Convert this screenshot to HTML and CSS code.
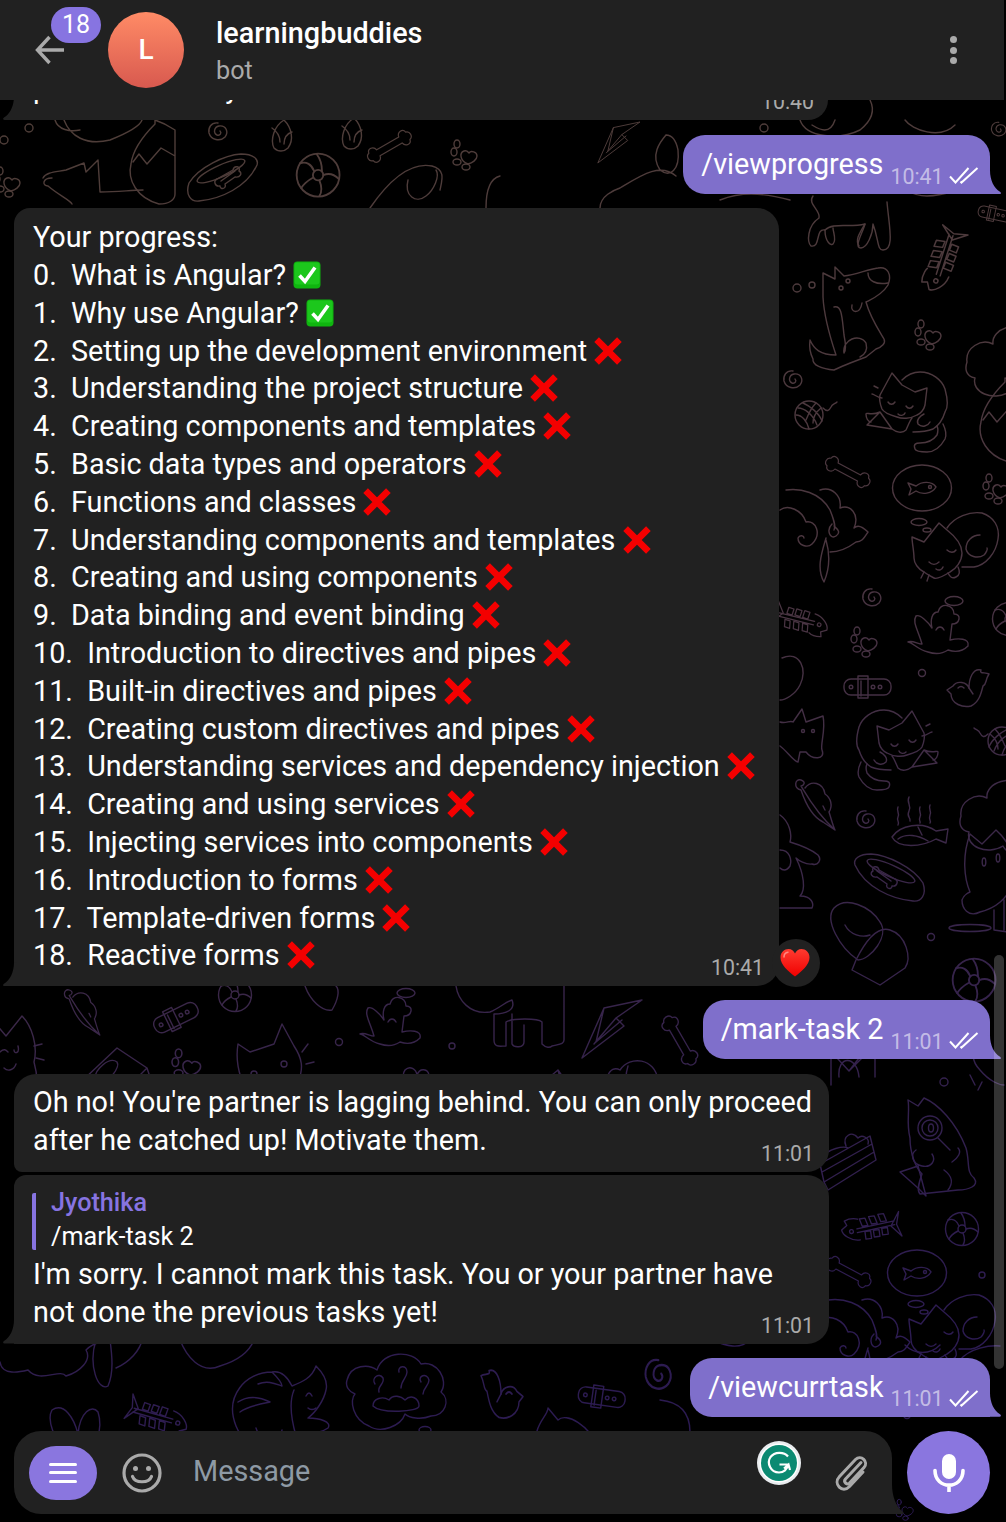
FILE: index.html
```html
<!DOCTYPE html>
<html lang="en">
<head>
<meta charset="utf-8">
<title>learningbuddies</title>
<link rel="stylesheet" href="styles.css">
</head>
<body>
<svg class="sprites" width="0" height="0" aria-hidden="true">
  <defs>
    <symbol id="i-x" viewBox="0 0 28 28"><path d="M2.6 2.6 25.4 25.4M25.4 2.6 2.6 25.4" stroke="#f40000" stroke-width="6.6" fill="none"/></symbol>
    <symbol id="i-ok" viewBox="0 0 28 28"><rect x="0.5" y="0.5" width="27" height="27" rx="4" fill="#0fb50f"/><rect x="1.5" y="1.5" width="25" height="22" rx="3" fill="#25d425" opacity=".6"/><path d="M6.5 14.5 12 20.5 22 6.5" stroke="#fff" stroke-width="3.6" fill="none" stroke-linejoin="miter"/></symbol>
    <symbol id="i-ticks" viewBox="0 0 30 18"><path d="M1 10.5 6.5 16.5 19.500 2M11.500 15.500 12.500 16.500 28.500 2" stroke="#fff" stroke-width="2" fill="none"/></symbol>
  </defs>
</svg>

<svg class="wallpaper" viewBox="0 0 1006 1522" aria-hidden="true">
  <defs>
    <linearGradient id="wg" gradientUnits="userSpaceOnUse" x1="0" y1="100" x2="260" y2="1500">
      <stop offset="0" stop-color="#4f3e38"/>
      <stop offset=".42" stop-color="#4b3640"/>
      <stop offset=".68" stop-color="#38254a"/>
      <stop offset="1" stop-color="#2b1a52"/>
    </linearGradient>
    <g id="bone"><path d="M10-4H40C41-10 49-11 50-5 55-4 55 4 50 5 49 11 41 10 40 4H10C9 10 1 11 0 5-5 4-5-4 0-5 1-11 9-10 10-4Z"/></g>
    <g id="paw"><path d="M17 23C9 20 8 12 13 10 16 9 17 11 18 12 20 9 26 11 26 15 26 19 21 22 17 23Z"/><ellipse cx="6" cy="3" rx="3" ry="4"/><ellipse cx="3" cy="11" rx="3" ry="4"/><ellipse cx="6" cy="21" rx="4" ry="3"/><ellipse cx="15" cy="26" rx="4" ry="3"/></g>
    <g id="ball"><circle cx="17" cy="17" r="16.500"/><circle cx="17" cy="17" r="4"/><path d="M14 14C12 9 8 6 3 8M20 14C20 9 19 5 16 1M21 17C26 15 30 17 33 20M18 21C20 26 20 30 18 33M13 19C9 21 5 25 4 27"/></g>
    <g id="yarn"><circle cx="14" cy="15" r="14"/><path d="M3 8C9 8 18 14 22 25M8 3C15 6 24 13 27 21M1 15C7 15 12 21 14 29M21 3C16 8 13 15 11 20M26 8C21 12 18 18 18 23M28 8C32 12 34 11 36 7 37 4 40 4 42 2"/></g>
    <g id="fishbone"><path d="M0 0 10 12 0 26 4 13ZM6 13 46 10M6 17 46 14M14 4H20V11H14ZM23 3H29V10H23ZM32 2H38V10H32ZM14 18H20L22 26H16ZM24 17H30L32 25H26ZM34 16H40L42 24H36ZM44 2C54 2 62 10 62 15L56 19 58 24C50 27 44 24 44 24"/><circle cx="52" cy="12" r="2"/></g>
    <g id="collar"><rect x="0" y="3" width="47" height="16" rx="7"/><path d="M14 0H24V22H14ZM17 5V20"/><circle cx="29" cy="11" r="1.800"/><circle cx="36" cy="11" r="1.800"/><circle cx="7" cy="11" r="1.800"/></g>
    <g id="bowl"><path d="M2 30C-2 42 4 49 12 48 34 46 60 34 70 12 72 6 66 1 54 1 38 2 12 14 2 30Z"/><ellipse cx="34" cy="18" rx="26" ry="6" transform="rotate(-24 34 18)"/><path d="M34 28 48 18M30 26C26 28 28 34 33 33 33 37 40 36 38 31L48 24C53 25 56 20 52 18 54 13 47 12 46 17Z"/></g>
    <g id="spiral"><path d="M11 3C4 2 1 8 2 13 4 20 13 22 18 17 22 12 19 5 12 6 7 7 6 13 10 15 13 16 15 13 13 11"/></g>
    <g id="plate"><ellipse cx="30" cy="23" rx="29.500" ry="23"/><path d="M17 30 19 24 16 18 24 21C30 16 40 16 44 22 40 29 30 30 24 26Z"/><circle cx="38" cy="22" r="1.500"/></g>
    <g id="catsleep"><path d="M0 22 12 27 27 8 35 15C44 22 50 30 50 38 50 46 44 54 38 57 30 62 24 64 22 63 16 60 12 57 12 57 6 54 2 48 2 43 2 36 0 28 0 22Z"/><path d="M35 13C42 2 58-4 70-2 82 2 88 12 86 24 84 38 74 50 62 52L50 52"/><path d="M68 20C60 20 54 26 54 34 56 42 66 44 72 40 74 38 76 34 75 33M17 47C20 50 24 50 27 47M35 35C38 38 42 38 44 35M24 54C27 56 30 55 31 52M12 57 9 63M17 60 15 66M36 58C38 62 40 64 44 62 48 60 48 56 46 52"/><ellipse cx="7" cy="7" rx="8" ry="3.500"/><ellipse cx="15" cy="15" rx="4" ry="2"/></g>
    <g id="catletter"><path d="M14 23 26 1 36 13 49 20 61 16 59 33C58 38 54 42 51 43 44 47 36 47 31 45 24 43 18 41 16 37 14 32 13 27 14 23Z"/><path d="M36 8C42 2 48 0 54 0 66 0 76 8 79 17 82 28 82 36 79 40 76 50 72 54 67 57 60 60 54 60 47 60"/><path d="M77 52C80 58 81 62 79 67 74 76 68 80 61 80 56 80 50 80 49 77 47 72 50 71 54 71 60 71 66 70 71 63 72 60 72 56 71 54"/><path d="M1 53 14 40 26 57ZM14 40C6 44 0 40 0 42 0 46 2 50 5 50M16 26C12 26 8 22 6 22M12 16 8 14M22 30C24 33 27 33 29 30M40 34C42 37 45 37 47 34M32 42C34 44 38 44 39 41M26 57C30 60 36 62 40 58 42 54 44 48 46 46M58 42C54 44 50 48 52 52 56 56 62 54 64 50"/></g>
    <g id="dogsit"><path d="M13 6 25 12 25 0 34 9C46 8 58 2 68 1 78-1 82 8 78 18 72 28 62 32 56 35 60 50 68 62 74 72 76 76 72 80 66 82L56 90C40 96 30 100 24 103 12 102 2 98 3 92 0 86-1 80 0 73 4 82 10 88 26 88 20 70 14 50 13 30Z"/><path d="M58 6C58 14 66 18 78 16M24 40C32 38 32 50 34 68 36 78 36 84 34 86M34 86C32 72 50 66 56 76 58 84 54 88 50 90M42 38C40 46 50 48 52 36"/><circle cx="38" cy="14" r="2"/><circle cx="31" cy="21" r="2"/></g>
    <g id="dogwalk"><path d="M2 0C-4 8 10 14 8 22-4 30-4 46 0 50 10 52 4 32 14 34 22 26 38 32 54 28 52 36 42 52 50 52 56 52 62 38 62 28 68 44 66 54 72 54 84 54 78 30 76 6"/><path d="M14 34C14 46 20 50 22 48 26 44 22 36 22 32M54 28C48 38 44 44 48 50"/></g>
    <g id="cloud"><path d="M0 54C-2 40 14 30 26 36 24 20 52 12 66 24 72 14 88 18 90 30 102 30 108 50 96 56 104 64 100 76 84 76 82 94 50 100 42 84 26 94 4 84 8 70-2 68-2 60 0 54Z"/></g>
    <g id="swirl"><path d="M0 20C8 14 22 20 26 32 36 30 42 44 32 54 28 58 18 56 18 48 20 44 24 46 24 48M6 0C20-2 40 2 50 20 54 30 56 36 54 40M40 0C52-4 62 6 60 18 70 14 80 24 74 38 78 34 84 38 88 42 84 48 82 52 76 52 68 58 60 62 50 62M46 48C42 62 36 78 44 92 50 78 50 64 46 50M52 34C46 40 50 50 56 46 62 42 56 38 54 36"/></g>
    <g id="thought"><path d="M2 30C6 14 24 14 32 20 38 0 68 0 76 14 92 10 104 30 96 42 106 50 100 66 86 66 76 70 64 68 60 64 56 76 36 84 24 76 8 70 4 50 10 44 4 42 0 36 2 30Z"/><path d="M30 34C26 28 34 22 38 28 40 34 32 36 34 42M54 22C52 16 62 14 62 22 62 28 56 30 56 38M76 32C72 26 82 22 84 30 84 36 78 38 78 44M28 56C28 48 38 46 44 50 48 44 56 46 60 50 66 44 74 48 74 56 74 62 36 64 28 56Z"/><ellipse cx="80" cy="80" rx="6" ry="3.500"/></g>
    <g id="cathead"><path d="M18 80C8 64-2 44 2 20L14 28 38 20 46 0 58 22C66 34 68 44 62 58 60 72 56 78 50 84"/><circle cx="18" cy="50" r="3"/><circle cx="48" cy="40" r="3"/><path d="M32 62C26 62 30 72 36 68 40 74 50 68 44 62M35 58 34 66M66 28 72 20M70 40 78 38M70 54 78 54M-6 62H2"/></g>
    <g id="bird"><path d="M2 22 8 18C12 12 22 14 24 20 24 10 28 0 36 2 34 6 40 4 44 6 40 12 42 16 38 18 36 26 34 34 26 38 18 40 6 36 6 26Z"/><path d="M13 20C15 18 17 18 19 20M24 20 28 26"/></g>
    <g id="heart"><path d="M14 33C4 24-2 12 3 5 8 0 14 4 15 10 18 2 26 4 27 10 29 18 22 28 14 33Z"/></g>
    <g id="plane"><path d="M0 58 22 8 60 0 34 18 42 26ZM22 8 14 42 40 20M12 44 34 18"/></g>
    <g id="mouse"><path d="M8 10C0 8 2-2 8 0 14 2 10 6 8 6 14 16 24 34 42 50L30 42C22 38 14 28 8 10ZM12 8C18 0 30 2 32 14 38 18 40 26 36 32 38 38 40 46 42 50M30 26 32 30"/></g>
    <g id="fishsteam"><path d="M0 40C8 28 30 24 44 34L56 32 54 46 44 42C30 50 6 52 0 40ZM6 42C14 36 26 38 36 44M26 30 30 38"/><path d="M6 10C4 14 8 16 6 20 4 24 8 24 6 28M17 0C14 6 20 8 17 14 14 20 19 20 18 24M28 10C26 14 30 16 28 20 26 24 29 24 28 26M38 8C36 12 40 14 38 18 36 24 40 24 38 26"/></g>
    <g id="house"><path d="M0 30 36 0 54 26 24 56ZM36 0 44 30 24 56M6 38V70M50 30V62M14 62C12 40 32 40 34 62"/></g>
    <g id="cake"><path d="M0 36 50 8 54 24 4 54ZM2 44 52 16M4 54 8 62 56 32 54 24M2 30C8 20 24 18 28 20M26 18C22 8 32 2 38 10 42 6 50 10 48 16"/></g>
    <g id="angel"><path d="M18 52C8 50 2 42-2 42 2 40 8 44 12 44 8 30 2 22 6 16 10 14 18 22 22 28 20 20 22 12 28 12 30 2 44 4 44 14 52 14 50 24 42 24L40 40C48 38 60 38 58 46 52 52 44 52 38 50 32 54 24 54 18 52Z"/><ellipse cx="44" cy="1" rx="9" ry="4.500"/><path d="M26 30C28 26 32 26 34 30"/></g>
    <g id="dogmag"><path d="M2 40C-2 24 2 14 0 2L10 8 16 0C30 6 48 24 58 50 62 64 58 74 66 80 72 88 60 92 50 92L12 96C8 92 12 82 14 76 8 70 2 56 2 40Z"/><circle cx="22" cy="30" r="12"/><circle cx="22" cy="30" r="8"/><ellipse cx="23" cy="30" rx="2.500" ry="4"/><path d="M30 40 42 52M8 52C2 56 4 66 14 68 24 70 28 62 24 56M-8 74 10 68 18 98 10 90Z"/><path d="M36 72C44 78 46 84 40 92M44 64C50 60 54 54 50 50"/></g>
    <g id="fox"><path d="M30 4C20 14 8 28 6 44 2 60 12 78 34 84 44 84 50 80 50 74V10C44 6 36 2 30 0ZM8 42 14 34 22 44 36 28 50 36"/></g>
    <g id="stripecat"><path d="M60 30C70 26 80 22 84 10 92 18 96 26 94 34 92 44 84 56 76 62 88 62 100 66 96 72 88 78 74 78 64 80 50 96 14 96 4 70-8 40 14 16 40 16 50 14 56 22 60 30ZM40 16C48 24 50 28 50 30 44 28 36 24 26 28M6 46C18 38 30 42 38 46 28 48 16 50 8 56M62 34C56 48 60 66 64 80M50 74 46 90M38 78 38 94M24 72 30 88"/><path d="M74 40C76 36 78 36 80 40M84 52C82 54 78 54 76 52"/></g>
    <g id="bigdog"><path d="M8 0 20 10 34-4C50 10 56 30 50 50 46 64 34 74 18 78 6 84 0 74 0 66 2 60 8 58 8 58 2 44 0 22 8 0ZM42 66V96M32 76V96L46 98M54 60V96H62C66 94 64 80 60 64"/><ellipse cx="22" cy="28" rx="1.800" ry="4"/><ellipse cx="36" cy="24" rx="1.800" ry="4"/></g>
    <g id="cat2"><path d="M2 90C-2 60 0 30 8 8L18 20 34 0C44 10 50 30 46 46 50 60 50 76 44 90"/><path d="M12 36C16 32 18 34 20 36M30 30C32 38 26 38 26 34M16 52C20 56 26 54 28 48M46 30 54 28M48 42 56 44"/></g>
    <g id="box"><path d="M0 32 34 0 64 20 32 52ZM0 32 4 60 30 82 32 52M64 20 76 56 54 70M12 30C12 22 26 8 34 14 38 20 24 34 18 38"/></g>
    <g id="leaf"><path d="M14 0C4 6 0 20 4 28 8 32 14 32 18 28 24 20 22 8 14 0ZM2 8C8 12 10 16 10 22M22 12C16 14 14 18 14 24"/></g>
    <mask id="wm" maskUnits="userSpaceOnUse" x="0" y="0" width="1006" height="1522">
      <g fill="none" stroke="#fff" stroke-width="1.400" stroke-linejoin="round" stroke-linecap="round">
        <use href="#bone" transform="translate(371 157) rotate(-30) scale(.85)"/>
        <use href="#paw" transform="translate(451 141)"/>
        <use href="#paw" transform="translate(-6 168)"/>
        <use href="#ball" transform="translate(296 153) scale(1.300)"/>
        <use href="#bowl" transform="translate(187 153)"/>
        <use href="#fox" transform="translate(125 120)"/>
        <path d="M43 178C46 172 56 172 66 170L84 163 86 172 98 160 100 192C120 192 130 190 143 190M52 178C42 178 42 186 48 186 60 196 70 200 72 204"/>
        <path d="M64 120C70 136 86 146 110 140 130 132 140 126 142 120M55 120C58 130 70 132 80 130"/>
        <circle cx="29" cy="128" r="4"/><circle cx="4" cy="140" r="4"/>
        <use href="#leaf" transform="translate(270 120)"/>
        <use href="#spiral" transform="translate(207 120)"/>
        <use href="#leaf" transform="translate(340 118)"/>
        <path d="M370 208C392 176 412 162 432 166 446 170 442 180 440 190M408 180C404 196 416 204 426 196 434 190 440 176 436 170M486 208C486 186 492 178 500 176"/>
        <use href="#plane" transform="translate(598 122) scale(.7)"/>
        <path d="M600 208C600 196 614 190 620 188 640 176 660 162 676 176M666 135C660 142 650 155 660 170 670 178 680 170 678 150 676 140 672 135 666 135"/>
        <path d="M800 120C806 138 840 140 860 130 870 122 876 112 870 100M835 120C830 135 820 130 812 125M905 120C912 130 940 140 955 125M892 140C894 150 900 156 906 160"/>
        <circle cx="764" cy="128" r="4"/>
        <use href="#spiral" transform="translate(990 120) scale(.8)"/>
        <use href="#dogwalk" transform="translate(811 196)"/>
        <path d="M720 200C740 192 760 192 790 200M905 190C920 198 930 198 960 190"/>
        <use href="#fishbone" transform="translate(968 235) rotate(112) scale(1.050)"/>
        <use href="#collar" transform="translate(980 203) rotate(12) scale(.7)"/>
        <circle cx="797" cy="288" r="4"/><circle cx="812" cy="285" r="3"/>
        <use href="#dogsit" transform="translate(810 267)"/>
        <use href="#paw" transform="translate(915 321)"/>
        <use href="#cloud" transform="translate(967 308)"/>
        <use href="#catletter" transform="translate(866 372)"/>
        <use href="#yarn" transform="translate(795 400)"/>
        <use href="#spiral" transform="translate(782 368)"/>
        <use href="#fox" transform="translate(975 378)"/>
        <use href="#bone" transform="translate(829 462) rotate(28) scale(.85)"/>
        <use href="#plate" transform="translate(892 465)"/>
        <use href="#paw" transform="translate(983 475)"/>
        <use href="#catsleep" transform="translate(912 515)"/>
        <use href="#swirl" transform="translate(780 490)"/>
        <use href="#spiral" transform="translate(861 586)"/>
        <use href="#fishbone" transform="translate(778 600) rotate(18) scale(.9)"/>
        <use href="#paw" transform="translate(851 628)"/>
        <use href="#angel" transform="translate(910 600)"/>
        <circle cx="922" cy="673" r="3.500"/>
        <use href="#ball" transform="translate(992 602)"/>
        <use href="#collar" transform="translate(844 676)"/>
        <use href="#bird" transform="translate(945 668)"/>
        <path d="M782 658C800 650 808 670 800 685 795 695 785 700 780 700"/>
        <path d="M780 722C786 724 790 720 793 722L802 709 806 722 823 716C826 730 820 745 822 750 826 760 812 760 806 752L800 752 798 762C794 762 786 750 780 746"/>
        <circle cx="803" cy="731" r="1.500"/><circle cx="813" cy="731" r="1.500"/>
        <use href="#catletter" transform="translate(938 710) scale(-1 1)"/>
        <use href="#yarn" transform="translate(1016 726) scale(-1 1)"/>
        <use href="#cloud" transform="translate(961 762)"/>
        <use href="#mouse" transform="translate(793 780)"/>
        <use href="#spiral" transform="translate(855 808)"/>
        <use href="#fishsteam" transform="translate(892 797)"/>
        <path d="M780 815C790 822 792 835 790 842 800 845 812 850 818 855 822 860 818 866 812 864 806 865 798 860 796 858 804 874 806 890 800 896 812 896 814 904 812 908H780M780 850C790 850 792 860 790 866 786 872 782 870 780 868"/>
        <use href="#bowl" transform="translate(925 853) scale(-1 1)"/>
        <use href="#bigdog" transform="translate(962 834)"/>
        <ellipse cx="970" cy="928" rx="21" ry="3.500"/>
        <path d="M858 960C840 948 824 920 834 908 846 896 870 906 880 922 890 936 870 960 858 960M845 925C850 935 862 938 870 935M856 960 852 970 880 985 905 968C912 958 906 935 890 930 878 926 866 940 856 960"/>
        <circle cx="931" cy="937" r="3.500"/>
        <use href="#ball" transform="translate(952 958) scale(1.300)"/>
        <use href="#cat2" transform="translate(-12 1016)"/>
        <use href="#mouse" transform="translate(62 990) scale(.9)"/>
        <use href="#collar" transform="translate(150 1018) rotate(-26)"/>
        <use href="#box" transform="translate(83 1048)"/>
        <use href="#paw" transform="translate(172 1050) scale(1.100)"/>
        <use href="#cathead" transform="translate(236 1024)"/>
        <use href="#ball" transform="translate(218 978)"/>
        <path d="M305 986C310 1000 322 1012 332 1010 338 1000 340 990 336 986"/>
        <use href="#angel" transform="translate(362 992)"/>
        <circle cx="339" cy="1042" r="3.500"/><circle cx="452" cy="1046" r="3"/>
        <path d="M456 986C458 1000 470 1015 490 1012 500 1008 505 1002 512 1000 516 1010 506 1014 494 1014L494 1040C494 1048 500 1046 506 1046L506 1022C512 1018 538 1018 542 1022V1044C546 1048 550 1048 552 1046 560 1044 564 1044 564 1040V986M512 1014V1044C514 1048 524 1048 524 1042V1025"/>
        <use href="#plane" transform="translate(582 1000)"/>
        <use href="#bone" transform="translate(668 1020) rotate(60) scale(.95)"/>
        <use href="#heart" transform="translate(402 1065)"/>
        <ellipse cx="480" cy="1095" rx="17" ry="8"/><ellipse cx="480" cy="1095" rx="11" ry="4"/>
        <ellipse cx="365" cy="1100" rx="14" ry="6"/>
        <use href="#house" transform="translate(522 1070)"/>
        <path d="M610 1108C600 1080 610 1064 620 1070 630 1055 655 1058 658 1080 672 1070 680 1090 680 1108M628 1066C622 1085 630 1100 634 1108"/>
        <use href="#house" transform="translate(825 1015)"/>
        <path d="M978 1040C972 1050 970 1060 980 1070 990 1082 1000 1085 1004 1085M970 1075 975 1085M982 1082 978 1090"/>
        <circle cx="944" cy="1082" r="4"/>
        <use href="#cake" transform="translate(820 1128)"/>
        <use href="#dogmag" transform="translate(908 1098)"/>
        <use href="#fishbone" transform="translate(902 1236) rotate(172) scale(.95)"/>
        <use href="#ball" transform="translate(945 1212)"/>
        <use href="#bone" transform="translate(830 1262) rotate(28) scale(.85)"/>
        <use href="#plate" transform="translate(887 1250)"/>
        <circle cx="982" cy="1275" r="3"/>
        <use href="#swirl" transform="translate(822 1300)"/>
        <use href="#catsleep" transform="translate(909 1297)"/>
        <path d="M0 1362C2 1376 20 1372 28 1370 40 1384 60 1368 66 1376 80 1372 92 1360 86 1350 96 1340 108 1342 108 1342M96 1340C88 1365 98 1392 108 1386 114 1372 112 1355 110 1340M116 1368C130 1362 140 1350 142 1340M180 1340C186 1355 200 1375 220 1366 240 1360 250 1350 254 1340"/>
        <use href="#fishbone" transform="translate(133 1394) rotate(20)"/>
        <use href="#stripecat" transform="translate(232 1356)"/>
        <use href="#thought" transform="translate(345 1350)"/>
        <use href="#bird" transform="translate(525 1368) scale(-1 1.300)"/>
        <use href="#collar" transform="translate(580 1383) rotate(8)"/>
        <g transform="translate(643 1355) scale(1.400 1.700)"><use href="#spiral"/></g>
        <path d="M68 1462C54 1436 46 1420 52 1410 64 1402 74 1418 78 1434 80 1412 92 1404 98 1412 104 1430 94 1450 86 1458M68 1432 42 1452"/>
        <path d="M537 1431C540 1420 548 1414 548 1408L558 1420C566 1412 590 1425 600 1450"/>
        <path d="M712 1340C726 1346 740 1350 750 1340M660 1400C680 1402 690 1412 690 1432"/>
        <path d="M960 1360C970 1348 990 1345 1000 1346M905 1345C915 1355 930 1355 940 1345"/>
        <use href="#paw" transform="translate(895 1500) scale(.7)"/>
        <circle cx="907" cy="1415" r="3.500"/>
      </g>
    </mask>
  </defs>
  <rect width="1006" height="1522" fill="url(#wg)" mask="url(#wm)"/>
</svg>

<main class="app">
  <header class="topbar">
    <div class="back">
      <svg class="back-icon" viewBox="0 0 30 30"><path d="M29 15H3M14.500 2 2.500 15 14.500 28" fill="none" stroke="#aaa" stroke-width="3.400"/></svg>
      <span class="badge">18</span>
    </div>
    <div class="avatar">L</div>
    <div class="peer">
      <div class="peer-name">learningbuddies</div>
      <div class="peer-status">bot</div>
    </div>
    <div class="more"><i></i><i></i><i></i></div>
  </header>

  <section class="feed">
    <div class="bubble in tail clipped">
      <div class="clip">
        <div class="clip-text">partner is  ready</div>
        <span class="time clip-time">10:40</span>
      </div>
    </div>

    <div class="bubble out tail m15">
      <div class="text">/viewprogress</div>
      <span class="time"><span>10:41</span><svg class="ticks"><use href="#i-ticks"/></svg></span>
    </div>

    <div class="bubble in tail progress">
      <div class="line">Your progress:</div>
      <div class="line">0.  What is Angular? <svg class="em"><use href="#i-ok"/></svg></div>
      <div class="line">1.  Why use Angular? <svg class="em"><use href="#i-ok"/></svg></div>
      <div class="line">2.  Setting up the development environment <svg class="em"><use href="#i-x"/></svg></div>
      <div class="line">3.  Understanding the project structure <svg class="em"><use href="#i-x"/></svg></div>
      <div class="line">4.  Creating components and templates <svg class="em"><use href="#i-x"/></svg></div>
      <div class="line">5.  Basic data types and operators <svg class="em"><use href="#i-x"/></svg></div>
      <div class="line">6.  Functions and classes <svg class="em"><use href="#i-x"/></svg></div>
      <div class="line">7.  Understanding components and templates <svg class="em"><use href="#i-x"/></svg></div>
      <div class="line">8.  Creating and using components <svg class="em"><use href="#i-x"/></svg></div>
      <div class="line">9.  Data binding and event binding <svg class="em"><use href="#i-x"/></svg></div>
      <div class="line">10.  Introduction to directives and pipes <svg class="em"><use href="#i-x"/></svg></div>
      <div class="line">11.  Built-in directives and pipes <svg class="em"><use href="#i-x"/></svg></div>
      <div class="line">12.  Creating custom directives and pipes <svg class="em"><use href="#i-x"/></svg></div>
      <div class="line">13.  Understanding services and dependency injection <svg class="em"><use href="#i-x"/></svg></div>
      <div class="line">14.  Creating and using services <svg class="em"><use href="#i-x"/></svg></div>
      <div class="line">15.  Injecting services into components <svg class="em"><use href="#i-x"/></svg></div>
      <div class="line">16.  Introduction to forms <svg class="em"><use href="#i-x"/></svg></div>
      <div class="line">17.  Template-driven forms <svg class="em"><use href="#i-x"/></svg></div>
      <div class="line">18.  Reactive forms <svg class="em"><use href="#i-x"/></svg></div>
      <span class="time stamp">10:41</span>
      <span class="reaction">
        <svg viewBox="0 0 30 30" class="heart-icon">
          <defs><linearGradient id="hg" x1="0" y1="0" x2="0" y2="1"><stop offset="0" stop-color="#ff3b30"/><stop offset="1" stop-color="#f00000"/></linearGradient></defs>
          <path d="M15 28.500C8 23 .5 17 .5 9.500.5 4 4.500 1 8.500 1 11.500 1 13.800 2.800 15 5.500 16.200 2.800 18.500 1 21.500 1 25.500 1 29.500 4 29.500 9.500 29.500 17 22 23 15 28.500Z" fill="url(#hg)"/>
          <path d="M4 9C4 6.500 5.500 4.500 8 4.200" stroke="#ff8a80" stroke-width="1.500" fill="none" stroke-linecap="round"/>
        </svg>
      </span>
    </div>

    <div class="bubble out tail">
      <div class="text">/mark-task 2</div>
      <span class="time"><span>11:01</span><svg class="ticks"><use href="#i-ticks"/></svg></span>
    </div>

    <div class="bubble in wide first m15">
      <div class="line">Oh no! You're partner is lagging behind. You can only proceed</div>
      <div class="line">after he catched up! Motivate them.</div>
      <span class="time stamp">11:01</span>
    </div>

    <div class="bubble in wide tail last">
      <div class="reply">
        <div class="reply-body">
          <div class="reply-name">Jyothika</div>
          <div class="reply-text">/mark-task 2</div>
        </div>
      </div>
      <div class="line">I'm sorry. I cannot mark this task. You or your partner have</div>
      <div class="line">not done the previous tasks yet!</div>
      <span class="time stamp">11:01</span>
    </div>

    <div class="bubble out tail">
      <div class="text">/viewcurrtask</div>
      <span class="time"><span>11:01</span><svg class="ticks"><use href="#i-ticks"/></svg></span>
    </div>
  </section>

  <footer class="composer">
    <div class="input">
      <button class="menu-btn" type="button"><i></i><i></i><i></i></button>
      <svg class="smile" viewBox="0 0 40 40"><circle cx="20" cy="20" r="18" fill="none" stroke="#aaa" stroke-width="3.200"/><circle cx="13.500" cy="15.500" r="2.500" fill="#aaa"/><circle cx="26.500" cy="15.500" r="2.500" fill="#aaa"/><path d="M10.500 23.500C13 30.500 27 30.500 29.500 23.500" fill="none" stroke="#aaa" stroke-width="3.200" stroke-linecap="round"/></svg>
      <div class="placeholder">Message</div>
      <svg class="clip-icon" viewBox="0 0 34 38"><path d="M27 8.500 11.500 25C9 28 13 31.500 15.500 29L30 13.500C35 8 27 0 21.500 5.500L5.500 22.500C-1.500 30 8.500 40 15.500 32.500L29 18" fill="none" stroke="#aaa" stroke-width="3" stroke-linecap="round"/></svg>
      <svg class="grammarly" viewBox="0 0 44 44"><circle cx="22" cy="22" r="22" fill="#e9ecef"/><circle cx="22" cy="22" r="19.500" fill="#fff"/><circle cx="22" cy="22" r="18" fill="#0b8a72"/><path d="M31 15.500C27 10.500 17.500 10.500 13.500 16 9.500 22 13.500 31.500 22 31.500 26.500 31.500 30.500 28.500 31 23.500H22.500M27 27.500 31.500 23.500 33 29" fill="none" stroke="#fff" stroke-width="2.200"/></svg>
    </div>
    <button class="mic" type="button">
      <svg viewBox="0 0 32 38" class="mic-icon"><rect x="9" y="0" width="14" height="25" rx="7" fill="#fff"/><path d="M2 16.500C2 36 30 36 30 16.500M16 31V38" fill="none" stroke="#fff" stroke-width="3.600" stroke-linecap="round"/></svg>
    </button>
  </footer>
</main>
<div class="scrollbar"></div>
</body>
</html>
```

FILE: styles.css
```css
* { box-sizing: border-box; }

html, body {
  margin: 0;
  height: 100%;
  background: #000;
}

body {
  position: relative;
  width: 1006px;
  height: 1522px;
  overflow: hidden;
  font-family: Roboto, "Noto Sans", sans-serif;
  color: #fff;
}

.sprites { position: absolute; }

.wallpaper {
  position: absolute;
  inset: 0;
  width: 1006px;
  height: 1522px;
}

.app {
  position: relative;
  display: flex;
  flex-direction: column;
  width: 1006px;
  height: 1522px;
}

/* header */
.topbar {
  flex: none;
  display: flex;
  align-items: center;
  width: 1004px;
  height: 100px;
  padding-left: 35px;
  background: #212121;
}

.back {
  position: relative;
  width: 73px;
  height: 30px;
}

.back-icon {
  display: block;
  width: 30px;
  height: 30px;
}

.badge {
  position: absolute;
  left: 16px;
  top: -28px;
  width: 50px;
  height: 36px;
  border-radius: 18px;
  background: #8774e1;
  font-size: 25px;
  line-height: 36px;
  text-align: center;
  color: #fff;
}

.avatar {
  flex: none;
  width: 76px;
  height: 76px;
  border-radius: 50%;
  background: linear-gradient(#ff8b66, #d8594f);
  font-size: 28px;
  font-weight: 500;
  line-height: 76px;
  text-align: center;
}

.peer {
  flex: 1;
  padding: 3px 0 0 32px;
}

.peer-name {
  font-size: 28.8px;
  font-weight: 500;
  line-height: 38px;
}

.peer-status {
  font-size: 25.2px;
  line-height: 38px;
  color: #aaa;
}

.more {
  display: flex;
  flex-direction: column;
  gap: 3.500px;
  margin-right: 47px;
}

.more i {
  display: block;
  width: 7px;
  height: 7px;
  border-radius: 50%;
  background: #aaa;
}

/* feed */
.feed {
  flex: 1;
  display: flex;
  flex-direction: column;
  align-items: flex-start;
  gap: 14px;
  padding-left: 14px;
  overflow: hidden;
}

.bubble {
  position: relative;
  flex: none;
  font-size: 28.75px;
  line-height: 37.8px;
  border-radius: 22px;
}

.bubble.in {
  padding: 10px 18px 12px 19px;
  background: #212121;
}

.bubble.out {
  display: flex;
  align-items: flex-end;
  gap: 7px;
  align-self: flex-end;
  margin-right: 16px;
  padding: 11px 11px 10.4px 18px;
  background: #7f6fcb;
}

.m15 { margin-top: 1px; }

.bubble.tail::after {
  content: "";
  position: absolute;
  bottom: 0;
  width: 14px;
  height: 24px;
  background: inherit;
}

.bubble.in.tail { border-bottom-left-radius: 0; }
.bubble.in.tail::after {
  left: -11px;
  clip-path: path("M11 0 L14 0 L14 24 L1.500 24 C0 24 -0.500 22.500 1 21.500 C7 18 11 10 11 0 Z");
}

.bubble.out.tail { border-bottom-right-radius: 0; }
.bubble.out.tail::after {
  right: -11px;
  clip-path: path("M3 0 L0 0 L0 24 L12.500 24 C14 24 14.500 22.500 13 21.500 C7 18 3 10 3 0 Z");
}

.clipped {
  width: 814px;
  height: 20px;
  padding: 0 !important;
  border-radius: 0 0 22px 0;
}

.clip {
  position: relative;
  height: 20px;
  overflow: hidden;
}

.clip-text {
  position: absolute;
  left: 19px;
  bottom: 12px;
  white-space: pre;
}

.clip-time {
  position: absolute;
  right: 14px;
  bottom: 6px;
}

.text { white-space: pre; }

.line { white-space: pre; }

.em {
  display: inline-block;
  width: 28px;
  height: 28px;
  vertical-align: -4px;
}

.bubble.in.progress {
  width: 765px;
  padding-top: 11px;
  padding-bottom: 11px;
  border-top-left-radius: 16px;
}

.wide { width: 815px; }

.first {
  margin-top: 0.6px;
  border-bottom-left-radius: 8px;
}

.last {
  margin-top: -10.5px;
  border-top-left-radius: 12px;
}

.time {
  display: flex;
  align-items: center;
  gap: 5.5px;
  font-size: 21.3px;
  line-height: 24px;
  color: #aaa;
  white-space: nowrap;
}

.bubble.out .time {
  color: rgba(255, 255, 255, 0.55);
  margin-bottom: -5px;
}

.ticks {
  width: 30px;
  height: 18px;
  margin-top: -3px;
}

.stamp {
  position: absolute;
  right: 15px;
  bottom: 6px;
}

.reaction {
  position: absolute;
  right: -41px;
  bottom: -1px;
  display: flex;
  align-items: center;
  justify-content: center;
  width: 48px;
  height: 48px;
  padding-right: 3px;
  border-radius: 50%;
  background: #212121;
}

.heart-icon {
  width: 30px;
  height: 30px;
}

/* reply quote */
.reply {
  display: flex;
  height: 70px;
  margin-top: 1px;
  padding: 7px 0 4px;
}

.reply-body {
  flex: 1;
  margin-left: -1px;
  padding-left: 15px;
  border-left: 4px solid #8774e1;
  border-radius: 2px;
  height: 57px;
}

.reply-name,
.reply-text {
  position: relative;
  top: -7px;
  font-size: 25.2px;
  line-height: 34px;
}

.reply-name {
  font-weight: 500;
  color: #8774e1;
}

/* composer */
.composer {
  flex: none;
  display: flex;
  align-items: flex-start;
  gap: 15px;
  height: 91px;
  padding-left: 14px;
}

.input {
  position: relative;
  flex: none;
  display: flex;
  align-items: center;
  width: 878px;
  height: 83px;
  padding-left: 15px;
  background: #212121;
  border-radius: 27px 27px 0 27px;
}

.input::after {
  content: "";
  position: absolute;
  right: -12px;
  bottom: 0;
  width: 15px;
  height: 30px;
  background: inherit;
  clip-path: path("M3 0 L0 0 L0 30 L13 30 C15 30 15 28.500 13.500 27.500 C7 23 3 12 3 0 Z");
}

.menu-btn {
  flex: none;
  display: flex;
  flex-direction: column;
  align-items: center;
  justify-content: center;
  gap: 5.500px;
  width: 68px;
  height: 54px;
  padding: 0;
  border: 0;
  border-radius: 27px;
  background: #8a76df;
}

.menu-btn i {
  display: block;
  width: 28px;
  height: 3px;
  border-radius: 1.500px;
  background: #fff;
}

.smile {
  flex: none;
  width: 40px;
  height: 40px;
  margin-left: 25px;
}

.placeholder {
  flex: 1;
  margin: 0 0 3px 31px;
  font-size: 28.8px;
  line-height: 38px;
  color: #8e9aa5;
}

.clip-icon {
  flex: none;
  width: 34px;
  height: 38px;
  margin-right: 24px;
}

.grammarly {
  position: absolute;
  left: 743px;
  top: 10px;
  width: 44px;
  height: 44px;
}

.mic {
  flex: none;
  display: flex;
  align-items: center;
  justify-content: center;
  width: 83px;
  height: 83px;
  padding: 0;
  border: 0;
  border-radius: 50%;
  background: #8a76df;
}

.mic-icon {
  width: 32px;
  height: 38px;
}

.scrollbar {
  position: absolute;
  left: 994px;
  top: 955px;
  width: 10px;
  height: 414px;
  border-radius: 5px;
  background: rgba(255, 255, 255, 0.2);
}
```
